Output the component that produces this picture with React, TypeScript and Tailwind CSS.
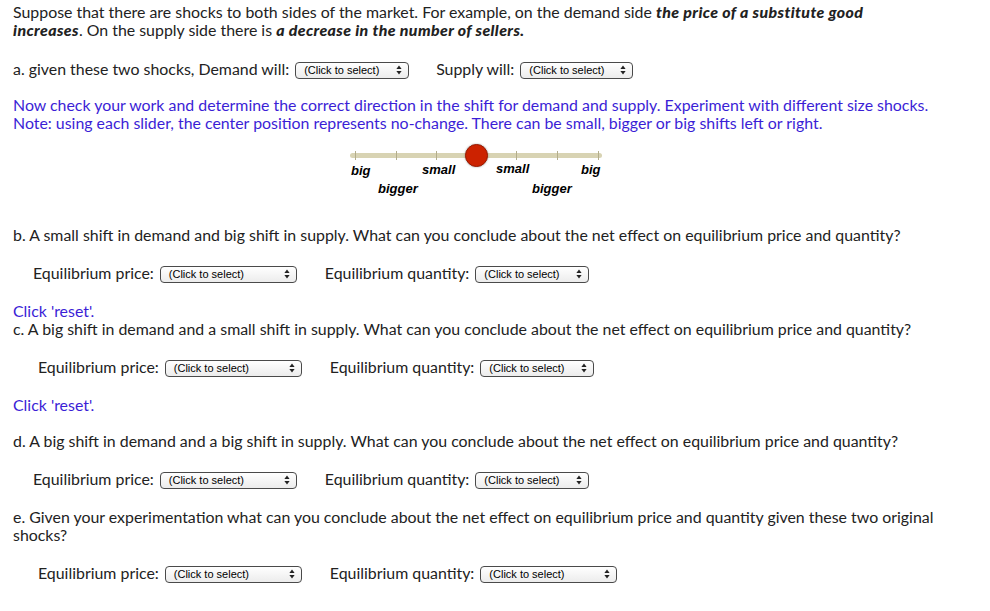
import React from 'react';

const Select = ({ width = 'w-[137px]' }: { width?: string }) => (
  <span
    className={`inline-flex ${width} h-[17px] items-center justify-between rounded-[4px] border border-[#4a4a4a] bg-gradient-to-b from-white to-[#ececec] pl-[8px] pr-[6px] align-middle text-[11px] leading-none text-black`}
    style={{ fontFamily: '"Liberation Sans", Arial, sans-serif' }}
  >
    <span>(Click to select)</span>
    <svg width="6" height="10" viewBox="0 0 6 10" className="shrink-0">
      <path d="M3 0.5 L5.6 4 L0.4 4 Z" fill="#222" />
      <path d="M3 9.5 L5.6 6 L0.4 6 Z" fill="#222" />
    </svg>
  </span>
);

const EqRow = ({ indent, qtyWidth }: { indent: string; qtyWidth?: string }) => (
  <div className={`flex h-[20px] items-center ${indent}`}>
    <span>Equilibrium price:</span>
    <span className="ml-[6px]">
      <Select />
    </span>
    <span className="ml-[28px]">Equilibrium quantity:</span>
    <span className="ml-[6px]">
      <Select width={qtyWidth ?? 'w-[114px]'} />
    </span>
  </div>
);

const Slider = () => {
  const ticks = [355, 396, 436, 516, 557, 598];
  const lbl = 'absolute text-[13px] font-bold italic leading-none text-black';
  return (
    <div
      className="relative ml-[337px] h-[60px] w-[260px]"
      style={{ fontFamily: '"Liberation Sans", Arial, sans-serif' }}
    >
      <div className="absolute left-0 top-[13px] h-[5px] w-[252px] rounded-full bg-[#d8d3b3]" />
      {ticks.map((t) => (
        <div
          key={t}
          className="absolute top-[11px] h-[9px] w-px bg-[#b3ad8c]"
          style={{ left: t - 350 }}
        />
      ))}
      <div className="absolute left-[115px] top-[4px] h-[23px] w-[23px] rounded-full border border-[#9a1a00] bg-[#cc2200] shadow-[0_0_2px_rgba(0,0,0,0.35)]" />
      <span className={`${lbl} left-[1px] top-[24px]`}>big</span>
      <span className={`${lbl} left-[28px] top-[42px]`}>bigger</span>
      <span className={`${lbl} left-[72px] top-[23px]`}>small</span>
      <span className={`${lbl} left-[146px] top-[22px]`}>small</span>
      <span className={`${lbl} left-[182px] top-[42px]`}>bigger</span>
      <span className={`${lbl} left-[231px] top-[23px]`}>big</span>
    </div>
  );
};

export default function App() {
  return (
    <div
      className="min-h-[611px] w-[990px] bg-white pl-[13px] pt-[3px] text-[15.9px] leading-[18px] text-[#222]"
      style={{ fontFamily: 'Lato, "Open Sans", sans-serif' }}
    >
      <div className="w-[942px]">
        <p>
          Suppose that there are shocks to both sides of the market. For example, on the demand side{' '}
          <b className="font-black italic tracking-[0.4px]">
            the price of a substitute good
            <br />
            increases
          </b>
          . On the supply side there is{' '}
          <b className="font-black italic tracking-[0.4px]">a decrease in the number of sellers.</b>
        </p>

        <div className="mt-[20px] flex h-[20px] items-center">
          <span>a. given these two shocks, Demand will:</span>
          <span className="ml-[6px]">
            <Select width="w-[114px]" />
          </span>
          <span className="ml-[27px]">Supply will:</span>
          <span className="ml-[6px]">
            <Select width="w-[113px]" />
          </span>
        </div>

        <p className="mt-[17px] text-[#3b1ed6]">
          Now check your work and determine the correct direction in the shift for demand and supply. Experiment with
          different size shocks.
          <br />
          Note: using each slider, the center position represents no-change. There can be small, bigger or big shifts
          left or right.
        </p>

        <div className="mt-[8px]">
          <Slider />
        </div>

        <p className="mt-[26px]">
          b. A small shift in demand and big shift in supply. What can you conclude about the net effect on equilibrium
          price and quantity?
        </p>

        <div className="mt-[19px]">
          <EqRow indent="pl-[20px]" />
        </div>

        <p className="mt-[19px] text-[#3b1ed6]">Click 'reset'.</p>
        <p>
          c. A big shift in demand and a small shift in supply. What can you conclude about the net effect on
          equilibrium price and quantity?
        </p>

        <div className="mt-[19px]">
          <EqRow indent="pl-[25px]" />
        </div>

        <p className="mt-[19px] text-[#3b1ed6]">Click 'reset'.</p>

        <p className="mt-[18px]">
          d. A big shift in demand and a big shift in supply. What can you conclude about the net effect on equilibrium
          price and quantity?
        </p>

        <div className="mt-[19px]">
          <EqRow indent="pl-[20px]" />
        </div>

        <p className="mt-[19px]">
          e. Given your experimentation what can you conclude about the net effect on equilibrium price and quantity
          given these two original shocks?
        </p>

        <div className="mt-[19px]">
          <EqRow indent="pl-[25px]" qtyWidth="w-[137px]" />
        </div>
      </div>
    </div>
  );
}
